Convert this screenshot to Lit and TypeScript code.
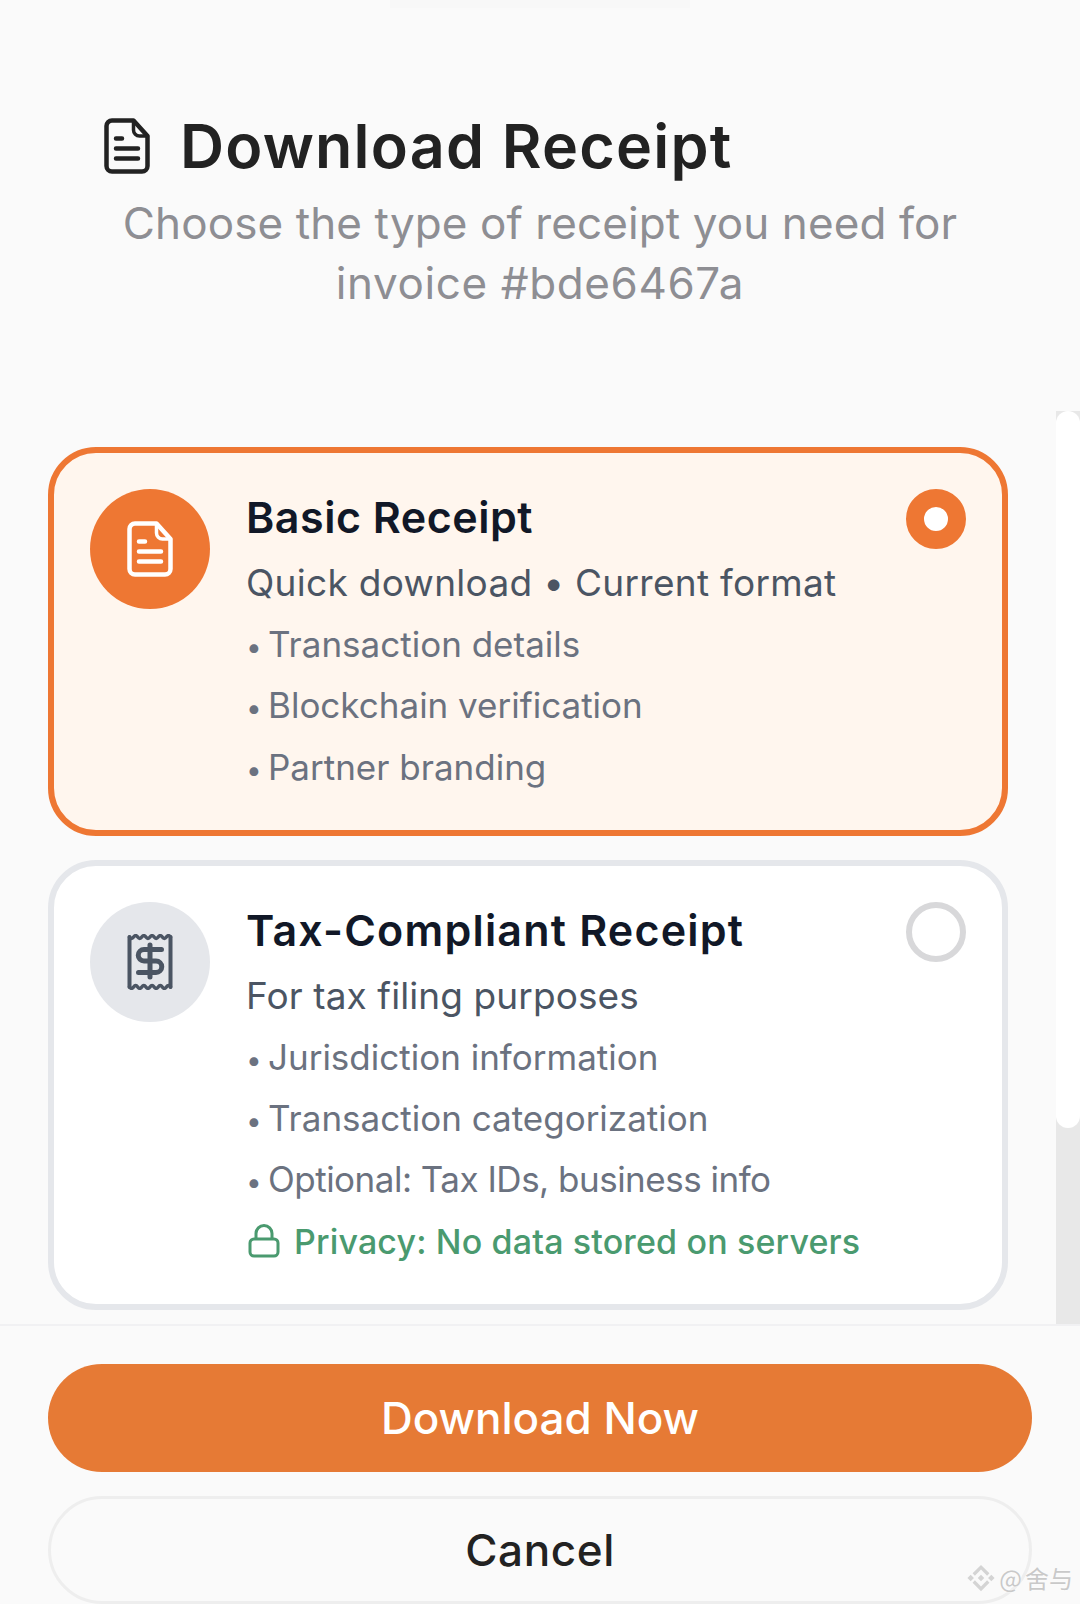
import { LitElement, css, html, svg } from "lit";
import { customElement } from "lit/decorators.js";

const docIcon = html`
  <svg width="46" height="56" viewBox="0 0 46 56" fill="none" stroke="currentColor" stroke-width="4.500" stroke-linejoin="round" stroke-linecap="round">
    <path d="M8 2.500h21.500L43.500 18v30a5.500 5.500 0 0 1-5.500 5.500H8A5.500 5.500 0 0 1 2.500 48V8A5.500 5.500 0 0 1 8 2.500z" />
    <path d="M29.500 3v9a6 6 0 0 0 6 6h8" stroke-width="3.500" />
    <path d="M12 20.500h6M12 30.500h22M12 40.500h22" />
  </svg>
`;

const receiptIcon = html`
  <svg width="46" height="56" viewBox="0 0 46 56" fill="none" stroke="currentColor" stroke-width="4" stroke-linecap="round" stroke-linejoin="round">
    <path d="M2.500 3v50M43.500 3v50" />
    <path d="M2.500 3q2.050 2.800 4.100 0t4.100 0 4.100 0 4.100 0 4.100 0 4.100 0 4.100 0 4.100 0 4.100 0 4.100 0" stroke-width="3.500" />
    <path d="M2.500 53q2.050 2.800 4.100 0t4.100 0 4.100 0 4.100 0 4.100 0 4.100 0 4.100 0 4.100 0 4.100 0 4.100 0" stroke-width="3.500" />
    <path d="M34.500 15.500H17a5.750 5.750 0 0 0 0 11.500h12a5.750 5.750 0 0 1 0 11.500H11.500M23 11v32" stroke-width="5" />
  </svg>
`;

const lockIcon = html`
  <svg class="lock" width="32" height="34" viewBox="0 0 32 34" fill="none" stroke="currentColor" stroke-width="3" stroke-linejoin="round">
    <rect x="2" y="15" width="28" height="17" rx="4" />
    <path d="M8 15V9.500a8 8 0 0 1 16 0V15" />
  </svg>
`;

const logoMark = svg`
  <path d="M16 12.500L19.500 16 16 19.500 12.500 16zM5 12.500L8.500 16 5 19.500 1.500 16zM27 12.500L30.500 16 27 19.500 23.500 16z" />
  <path d="M16 2l9 9-2.500 2.500L16 7l-6.500 6.500L7 11zM16 30l9-9-2.500-2.500L16 25l-6.500-6.500L7 21z" />
`;

const OPTIONS = [
  {
    id: "basic",
    selected: true,
    icon: docIcon,
    title: "Basic Receipt",
    sub: "Quick download • Current format",
    bullets: ["Transaction details", "Blockchain verification", "Partner branding"],
    privacy: "",
  },
  {
    id: "tax",
    selected: false,
    icon: receiptIcon,
    title: "Tax-Compliant Receipt",
    sub: "For tax filing purposes",
    bullets: ["Jurisdiction information", "Transaction categorization", "Optional: Tax IDs, business info"],
    privacy: "Privacy: No data stored on servers",
  },
];

@customElement("app-root")
export class AppRoot extends LitElement {
  static styles = css`
    :host {
      display: block;
      width: 1080px;
      height: 1604px;
      overflow: hidden;
      position: relative;
      background: #fafafa;
      font-family: Inter, "Noto Sans", sans-serif;
    }
    .page {
      display: flex;
      flex-direction: column;
      height: 1604px;
    }
    .handle {
      width: 300px;
      height: 8px;
      margin: 0 auto;
      background: #f8f8f8;
    }
    .header {
      height: 404px;
      box-sizing: border-box;
      padding: 100px 48px 0;
      text-align: center;
    }
    .title-row {
      display: flex;
      align-items: center;
      gap: 30px;
      padding-left: 56px;
      height: 76px;
    }
    .title-row svg {
      color: #222222;
    }
    h1 {
      margin: 0;
      font-size: 61px;
      line-height: 76px;
      font-weight: 600;
      color: #222222;
      letter-spacing: 1.2px;
    }
    .subtitle {
      margin: 9px 0 0;
      font-size: 44px;
      line-height: 60px;
      font-weight: 400;
      color: #8e8e93;
      letter-spacing: 0.1px;
    }
    .inv {
      letter-spacing: 0.6px;
    }
    .scroll {
      height: 916px;
      position: relative;
      box-sizing: border-box;
      padding: 36px 72px 0 48px;
      display: flex;
      flex-direction: column;
      gap: 24px;
    }
    .track {
      position: absolute;
      top: 0;
      right: 0;
      bottom: 0;
      width: 24px;
      background: #e8e8e8;
    }
    .thumb {
      height: 717px;
      background: #ffffff;
      border-radius: 12px;
    }
    .card {
      display: flex;
      gap: 36px;
      padding: 36px 36px 32px;
      border: 6px solid #e5e7eb;
      border-radius: 48px;
      background: #ffffff;
    }
    .card.on {
      border-color: #ee7733;
      background: #fff6ee;
    }
    .badge {
      width: 120px;
      height: 120px;
      flex: none;
      border-radius: 50%;
      background: #e5e7eb;
      color: #4b5563;
      display: flex;
      align-items: center;
      justify-content: center;
    }
    .on .badge {
      background: #ee7733;
      color: #ffffff;
    }
    .body {
      flex: 1;
      min-width: 0;
      margin-top: -2px;
    }
    .name {
      font-size: 43px;
      line-height: 60px;
      font-weight: 600;
      color: #111827;
      letter-spacing: 0.5px;
    }
    .tax .name {
      letter-spacing: 1.2px;
    }
    .sub {
      margin: 6px 0 1px;
      font-size: 37px;
      line-height: 60px;
      color: #4b5563;
      letter-spacing: 0.3px;
    }
    .tax .sub {
      letter-spacing: 0.1px;
    }
    .bullet {
      font-size: 35px;
      line-height: 61.300px;
      color: #6b7280;
    }
    .bullet.tight {
      letter-spacing: -0.5px;
    }
    .dot {
      display: inline-block;
      width: 22px;
      font-size: 28px;
      line-height: 1;
    }
    .privacy {
      display: flex;
      align-items: center;
      gap: 14px;
      font-size: 34px;
      line-height: 61px;
      font-weight: 500;
      color: #4a9a6f;
      letter-spacing: 0.15px;
    }
    .lock {
      margin-left: 2px;
    }
    .radio {
      width: 60px;
      height: 60px;
      flex: none;
      box-sizing: border-box;
      border-radius: 50%;
      border: 6px solid #d8d8da;
    }
    .on .radio {
      border: 18px solid #ee7733;
      background: #ffffff;
    }
    .footer {
      flex: 1;
      border-top: 2px solid #f1f1f3;
      padding: 38px 48px 0;
      display: flex;
      flex-direction: column;
      gap: 24px;
    }
    .btn {
      height: 108px;
      flex: none;
      box-sizing: border-box;
      border-radius: 54px;
      border: 3px solid #eeeeee;
      background: transparent;
      font-family: inherit;
      font-size: 44px;
      font-weight: 500;
      color: #222222;
      letter-spacing: 0.6px;
    }
    .btn.primary {
      border: none;
      background: #e67a35;
      color: #ffffff;
      letter-spacing: 0;
    }
    .mark {
      position: absolute;
      right: 7px;
      bottom: 9px;
      display: flex;
      align-items: center;
      gap: 3px;
      color: #c9c9c9;
      font-size: 24px;
      font-family: "Noto Sans CJK SC", sans-serif;
      text-shadow: 0 0 2px #ffffff;
    }
    .mark svg {
      fill: #d4d4d4;
    }
  `;

  private renderCard(o: (typeof OPTIONS)[number]) {
    return html`
      <div class="card ${o.id} ${o.selected ? "on" : ""}">
        <div class="badge">${o.icon}</div>
        <div class="body">
          <div class="name">${o.title}</div>
          <div class="sub">${o.sub}</div>
          ${o.bullets.map(
            (b) => html`<div class="bullet ${b.startsWith("Optional") ? "tight" : ""}"><span class="dot">•</span>${b}</div>`
          )}
          ${o.privacy ? html`<div class="privacy">${lockIcon}${o.privacy}</div>` : ""}
        </div>
        <div class="radio"></div>
      </div>
    `;
  }

  render() {
    return html`
      <div class="page">
        <div class="handle"></div>
        <div class="header">
          <div class="title-row">${docIcon}<h1>Download Receipt</h1></div>
          <p class="subtitle">Choose the type of receipt you need for<br /><span class="inv">invoice #bde6467a</span></p>
        </div>
        <div class="scroll">
          ${OPTIONS.map((o) => this.renderCard(o))}
          <div class="track"><div class="thumb"></div></div>
        </div>
        <div class="footer">
          <button class="btn primary">Download Now</button>
          <button class="btn">Cancel</button>
        </div>
      </div>
      <div class="mark">
        <svg width="30" height="30" viewBox="0 0 32 32">${logoMark}</svg>
        <span>@</span>
        <span>舍与</span>
      </div>
    `;
  }
}
